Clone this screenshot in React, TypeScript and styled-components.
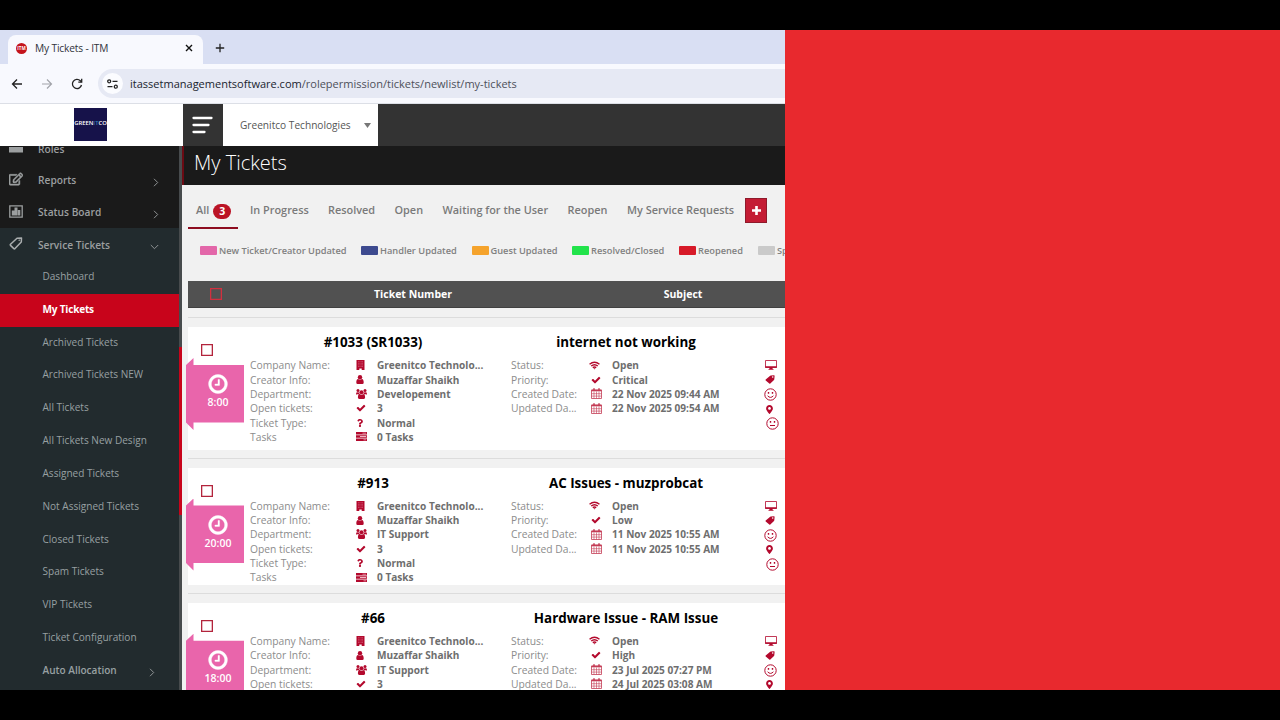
import React from "react";
import styled, { createGlobalStyle } from "styled-components";
import { FaMapMarkerAlt, FaQuestion, FaRegEdit } from "react-icons/fa";

const Global = createGlobalStyle`
  *{box-sizing:border-box}
  body{margin:0;background:#000;overflow:hidden}
  svg{display:block;flex:none}
`;
const Screen = styled.div`
  width:1280px;height:720px;padding:30px 0;display:flex;background:#000;
  font-family:"Open Sans","Noto Sans",sans-serif;white-space:nowrap;
`;
const Browser = styled.div`width:784.6px;height:660px;overflow:hidden;display:flex;flex-direction:column;background:#f1f1f1;`;
const RedPanel = styled.div`flex:1;background:#e8292e;`;

const TabStrip = styled.div`height:34px;flex:none;background:#d9dff3;display:flex;align-items:flex-end;padding-left:8px;`;
const BrowserTab = styled.div`
  width:195px;height:29px;background:#f8f9fe;border-radius:8px 8px 0 0;display:flex;align-items:center;
  padding:0 10px 3px 8px;font-size:10.2px;color:#30333b;
  span{margin-left:8px;flex:1;letter-spacing:-.15px}
`;
const Favicon = styled.i`
  width:11px;height:11px;border-radius:50%;background:#c4141c;color:#fff;font:700 4.5px/11px "Open Sans",sans-serif;text-align:center;
`;
const NewTab = styled.div`height:29px;display:flex;align-items:center;padding:0 0 4px 12px;`;
const AddressRow = styled.div`
  height:40px;flex:none;background:#f8f9fe;border-bottom:1px solid #dcdfe6;display:flex;align-items:center;padding-left:11px;
`;
const NavIcon = styled.div`width:30px;`;
const Omnibox = styled.div`
  margin-left:-3px;flex:1;height:29px;border-radius:15px 0 0 15px;background:#e6e9f4;display:flex;align-items:center;padding-left:4px;
  font-size:11.03px;color:#4d505a;
  b{font-weight:400;color:#20242e}
`;
const SiteInfo = styled.div`width:21px;height:21px;border-radius:50%;background:#fbfcff;display:flex;align-items:center;justify-content:center;margin-right:7px;`;

const AppBar = styled.div`height:42px;flex:none;display:flex;background:#333;`;
const LogoArea = styled.div`width:183px;background:#fff;display:flex;padding:4px 0 0 74px;`;
const Logo = styled.div`
  width:33px;height:33px;background:#16124a;color:#fff;font-size:5.9px;font-weight:600;line-height:31px;text-align:center;
  em{font-style:normal;color:#2f7fb5}
`;
const Burger = styled.div`width:40px;padding:12px 0 0 9px;`;
const CompanySelect = styled.div`
  width:155px;background:#fff;color:#555;font-size:10.15px;display:flex;align-items:center;justify-content:space-between;padding:0 7px 0 17px;
`;
const Body = styled.div`flex:1;display:flex;min-height:0;`;

const Sidebar = styled.div`width:179px;background:#222b2e;overflow:hidden;`;
const DarkGroup = styled.div`background:#1a1a1a;height:82px;display:flex;flex-direction:column;justify-content:flex-end;`;
const MenuRow = styled.div<{ $h?: number }>`
  height:${p => p.$h ?? 32}px;flex:none;display:flex;align-items:center;padding:0 20px 0 9px;color:#9c9fa0;font-size:10.2px;font-weight:600;
  >span{flex:1;margin-left:15px}
`;
const Glyph = styled.div`width:14px;padding-bottom:2px;`;
const Caret = styled.div`padding-top:5px;`;
const SubRow = styled.div<{ $active?: boolean; $bold?: boolean }>`
  height:32.83px;display:flex;align-items:center;justify-content:space-between;padding:0 24px 3px 42.5px;font-size:10.05px;
  color:${p => (p.$active ? "#fff" : "#98a0a2")};background:${p => (p.$active ? "#c8041b" : "transparent")};
  font-weight:${p => (p.$active ? 700 : p.$bold ? 600 : 400)};letter-spacing:${p => (p.$active ? "-.2px" : "0")};
`;
const Track = styled.div`width:3px;background:#474b4d;padding-top:201px;`;
const Thumb = styled.div`height:168px;background:#c8041b;`;

const Main = styled.div`flex:1;min-width:0;display:flex;flex-direction:column;background:#f1f1f1;overflow:hidden;`;
const TitleBar = styled.div`
  height:39px;flex:none;background:#1a1a1a;border-left:2px solid #6b0b14;color:#fff;font-weight:300;font-size:20px;line-height:33px;padding-left:10px;
`;
const Tabs = styled.div`height:44px;flex:none;display:flex;margin-left:6px;color:#7a7a7a;font-size:10.9px;font-weight:600;`;
const Tab = styled.div<{ $w: number; $on?: boolean }>`
  width:${p => p.$w}px;display:flex;align-items:center;padding:${p => (p.$on ? 7 : 5)}px 0 0 ${p => (p.$on ? 8 : 0)}px;
  ${p => p.$on && "margin-right:12px;border-bottom:2px solid #8e0d20;"}
`;
const Count = styled.span`
  margin:3px 0 0 4px;height:15px;width:18px;border-radius:8px;background:#bb1426;color:#fff;font-size:10.5px;font-weight:700;line-height:15px;text-align:center;
`;
const AddButton = styled.div`width:22px;height:25px;margin-top:13px;background:#c41c34;border:1px solid #8e1a2b;display:flex;align-items:center;justify-content:center;`;
const Legend = styled.div`height:52px;flex:none;padding:16px 0 0 18px;display:flex;color:#808080;font-size:9.25px;font-weight:600;line-height:12px;`;
const LegendItem = styled.div<{ $c: string; $w: number }>`
  width:${p => p.$w}px;flex:none;display:flex;
  &::before{content:"";width:17px;height:9px;border-radius:1px;background:${p => p.$c};margin:1px 2px 0 0;}
`;
const TableHead = styled.div`
  height:27px;flex:none;margin-left:6px;background:#515151;border-bottom:1px solid #404040;color:#fff;font-size:10.5px;font-weight:700;
  display:flex;align-items:center;padding-left:22px;
`;
const HeadCell = styled.span<{ $ml: number; $w: number }>`margin-left:${p => p.$ml}px;width:${p => p.$w}px;text-align:center;`;
const Box = styled.span<{ $c?: string }>`width:12px;height:12px;box-shadow:inset 0 0 0 1.3px ${p => p.$c ?? "#b3243c"};flex:none;`;
const Rule = styled.div<{ $h: number; $b: number }>`height:${p => p.$h}px;flex:none;margin:0 0 ${p => p.$b}px 6px;border-bottom:1px solid #dcdcdc;`;

const Card = styled.div<{ $h: number }>`height:${p => p.$h}px;flex:none;margin-left:4px;display:flex;background:linear-gradient(90deg,#f1f1f1 2px,#fff 2px);`;
const TimeCol = styled.div`width:58px;padding-top:17px;flex:none;`;
const BoxPad = styled.div`padding-left:15px;height:14px;display:flex;`;
const Ribbon = styled.div`
  height:73px;padding:15px 0 0 6px;color:#fff;background:#e965ab;font-size:10.5px;font-weight:600;
  clip-path:polygon(0 7px,7.5px 0,7.5px 7px,58px 7px,58px 64.5px,7.5px 64.5px,7.5px 72px,0 64.5px);
  display:flex;flex-direction:column;align-items:center;line-height:14px;
`;
const InfoCol = styled.div<{ $ml: number }>`width:248px;flex:none;margin-left:${p => p.$ml}px;padding-top:6px;`;
const CardTitle = styled.div`height:25px;line-height:18px;text-align:center;font-size:13.4px;font-weight:700;color:#000;padding-right:2px;`;
const InfoRow = styled.div<{ $l: number; $g: number; $pad?: number }>`
  height:14.35px;display:grid;grid-template-columns:${p => p.$l}px ${p => p.$g}px 1fr;align-items:center;font-size:10.3px;font-weight:500;color:#8c8c8c;
  padding-left:${p => p.$pad ?? 0}px;
  b{font-weight:700;font-size:10.08px;color:#6e6e6e}
`;
const IconCol = styled.div`margin-left:12px;padding-top:31px;`;
const IconCell = styled.div<{ $dx?: number }>`
  height:14.6px;width:14px;display:flex;align-items:center;justify-content:center;color:#b3092d;margin-left:${p => p.$dx ?? 0}px;
`;

const RED = "#b3092d";
const Check = () => (
  <svg width="10" height="10" viewBox="0 0 1792 1792" fill={RED}><path d="M1671 566q0 40-28 68l-724 724-136 136q-28 28-68 28t-68-28l-136-136-362-362q-28-28-28-68t28-68l136-136q28-28 68-28t68 28l294 295 656-657q28-28 68-28t68 28l136 136q28 28 28 68z" /></svg>
);
const Clock = () => (
  <svg width="22" height="22" viewBox="0 0 1792 1792" fill="#fff" stroke="#fff" strokeWidth="30"><path d="M1024 544v448q0 14-9 23t-23 9h-320q-14 0-23-9t-9-23v-64q0-14 9-23t23-9h224v-352q0-14 9-23t23-9h64q14 0 23 9t9 23zm416 352q0-148-73-273t-198-198-273-73-273 73-198 198-73 273 73 273 198 198 273 73 273-73 198-198 73-273zm224 0q0 209-103 385.500t-279.500 279.500-385.500 103-385.500-103-279.500-279.500-103-385.500 103-385.500 279.500-279.500 385.500-103 385.500 103 279.500 279.500 103 385.500z" /></svg>
);
const Building = () => (
  <svg width="9" height="10" viewBox="0 0 9 10"><path d="M.5 0h8v10H5.700V8.500H3.300V10H.5z" fill={RED} /><path d="M2.200 1.700h4.800M2.200 3.300h4.800M2.200 4.900h4.800M2.200 6.500h4.800" stroke="#d9718a" strokeWidth=".7" strokeDasharray=".8 .5" /></svg>
);
const Person = () => (
  <svg width="8" height="9" viewBox="0 0 8 9" fill={RED}><circle cx="4" cy="2.300" r="2.200" /><path d="M.3 7.500C.3 5.500 1 4.100 2 4.100q2 1.500 4 0C7 4.100 7.700 5.500 7.700 7.500Q7.700 9 6.400 9H1.600Q.3 9 .3 7.500z" /></svg>
);
const Group = () => (
  <svg width="11" height="10" viewBox="0 0 11 10" fill={RED}><circle cx="2" cy="1.600" r="1.500" /><circle cx="9" cy="1.600" r="1.500" /><circle cx="5.500" cy="3.300" r="2" /><path d="M0 5.500Q0 3.300 1 3.200l2.200.2q.1 1.300.8 1.900H1q-1 .6-1 .2zM11 5.500q0-2.200-1-2.300l-2.200.2Q7.700 4.700 7 5.300h3q1 .6 1 .2zM1.900 8.600q0-3.400 1.700-3.500 1.900 1.200 3.800 0 1.700.1 1.700 3.500Q9.100 10 7.800 10H3.200Q1.900 10 1.900 8.600z" /></svg>
);
const Wifi = () => (
  <svg width="11" height="9" viewBox="0 0 12 9" fill="none" stroke={RED} strokeWidth="1.500"><path d="M.6 3.200q5.400-4.600 10.800 0M2.400 5.100q3.600-3 7.200 0M4.100 6.800q1.900-1.500 3.800 0" /><path d="M4.900 7.500h2.200L6 8.800z" fill={RED} stroke="none" /></svg>
);
const Tag = () => (
  <svg width="10" height="9" viewBox="0 0 10 9"><path d="M5.700.500L9 .300q.7 0 .6.700l-.3 3.200q0 .4-.3.700L5.300 8.500q-.5.500-1 0L.7 5.400q-.5-.5 0-1L4.900.900q.4-.4.800-.4z" fill={RED} /><circle cx="7.700" cy="2" r=".8" fill="#fff" /></svg>
);
const Calendar = () => (
  <svg width="11" height="11" viewBox="0 0 11 11" fill="none" stroke="#c43c56"><path d="M.5 2h10v8.500H.5z" strokeWidth=".8" /><path d="M.5 2.500h10" strokeWidth="1.600" /><path d="M3 .2v2.500M8 .2v2.500" strokeWidth="1.500" /><path d="M.5 5.700h10M.5 8.100h10M3 3.500v7M5.500 3.500v7M8 3.500v7" strokeWidth=".6" /></svg>
);
const Tasks = () => (
  <svg width="11" height="9" viewBox="0 0 11 9" fill={RED}><path d="M0 0h11v2.400H0zM0 3.300h11v2.400H0zM0 6.600h11V9H0z" /><path d="M6.500.8h3.700v.8H6.500zM4 4.100h6.200v.8H4zM7.500 7.400h2.700v.8H7.500z" fill="#f3b6c3" /></svg>
);
const Monitor = () => (
  <svg width="12" height="10" viewBox="0 0 12 10"><path d="M.5.500h11v7H.5z" fill="none" stroke={RED} strokeWidth=".8" /><path d="M.3 6.300h11.400v1.500H.3zM4.700 7.500h2.600l.5 1.500h.7v.8h-5V9h.7z" fill={RED} /></svg>
);
const Face = ({ flat }: { flat?: boolean }) => (
  <svg width="13" height="13" viewBox="0 0 13 13" fill="none" stroke={RED}><circle cx="6.500" cy="6.500" r="5.700" /><path d={flat ? "M4 8.500h5" : "M3.600 7.800q2.900 3.200 5.800 0"} /><path d="M4.500 4v1.800M8.500 4v1.800" strokeWidth="1.400" /></svg>
);
const Chevron = ({ down }: { down?: boolean }) => (
  <svg width={down ? 9 : 6} height={down ? 6 : 9} viewBox={down ? "0 0 9 6" : "0 0 6 9"} fill="none" stroke="#9c9fa0" strokeWidth=".9"><path d={down ? "M.8 1l3.700 3.700L8.200 1" : "M1 .8l3.700 3.700L1 8.200"} /></svg>
);

type Ticket = { h: number; time: string; id: string; subject: string; dept: string; priority: string; created: string; updated: string };
const tickets: Ticket[] = [
  { h: 123, time: "8:00", id: "#1033 (SR1033)", subject: "internet not working", dept: "Developement", priority: "Critical", created: "22 Nov 2025 09:44 AM", updated: "22 Nov 2025 09:54 AM" },
  { h: 117.6, time: "20:00", id: "#913", subject: "AC Issues - muzprobcat", dept: "IT Support", priority: "Low", created: "11 Nov 2025 10:55 AM", updated: "11 Nov 2025 10:55 AM" },
  { h: 123, time: "18:00", id: "#66", subject: "Hardware Issue - RAM Issue", dept: "IT Support", priority: "High", created: "23 Jul 2025 07:27 PM", updated: "24 Jul 2025 03:08 AM" },
];

function TicketCard({ t }: { t: Ticket }) {
  const left: [string, React.ReactNode, string][] = [
    ["Company Name:", <Building />, "Greenitco Technolo..."],
    ["Creator Info:", <Person />, "Muzaffar Shaikh"],
    ["Department:", <Group />, t.dept],
    ["Open tickets:", <Check />, "3"],
    ["Ticket Type:", <FaQuestion size={8} color={RED} />, "Normal"],
    ["Tasks", <Tasks />, "0 Tasks"],
  ];
  const right: [string, React.ReactNode, string][] = [
    ["Status:", <Wifi />, "Open"],
    ["Priority:", <Check />, t.priority],
    ["Created Date:", <Calendar />, t.created],
    ["Updated Da...", <Calendar />, t.updated],
  ];
  return (
    <Card $h={t.h}>
      <TimeCol>
        <BoxPad><Box /></BoxPad>
        <Ribbon><Clock /><span>{t.time}</span></Ribbon>
      </TimeCol>
      <InfoCol $ml={6}>
        <CardTitle>{t.id}</CardTitle>
        {left.map(([l, i, v]) => <InfoRow key={l} $l={105.5} $g={21.5}><span>{l}</span>{i}<b>{v}</b></InfoRow>)}
      </InfoCol>
      <InfoCol $ml={5}>
        <CardTitle>{t.subject}</CardTitle>
        {right.map(([l, i, v], n) => <InfoRow key={l} $pad={8} $l={n ? 80 : 78} $g={n ? 21 : 23}><span>{l}</span>{i}<b>{v}</b></InfoRow>)}
      </InfoCol>
      <IconCol>
        <IconCell $dx={1}><Monitor /></IconCell>
        <IconCell><Tag /></IconCell>
        <IconCell><Face /></IconCell>
        <IconCell $dx={-1}><FaMapMarkerAlt size={9} /></IconCell>
        <IconCell $dx={2}><Face flat /></IconCell>
      </IconCol>
    </Card>
  );
}

const subItems = ["Dashboard", "My Tickets", "Archived Tickets", "Archived Tickets NEW", "All Tickets", "All Tickets New Design", "Assigned Tickets", "Not Assigned Tickets", "Closed Tickets", "Spam Tickets", "VIP Tickets", "Ticket Configuration", "Auto Allocation"];
const tabs: [string, number][] = [["In Progress", 78], ["Resolved", 66.5], ["Open", 48], ["Waiting for the User", 125], ["Reopen", 59.5], ["My Service Requests", 118]];
const legend: [string, string, number][] = [["#e367a9", "New Ticket/Creator Updated", 161], ["#3d4a8f", "Handler Updated", 110.5], ["#f5a32c", "Guest Updated", 100.5], ["#22e34b", "Resolved/Closed", 107], ["#d71a28", "Reopened", 79], ["#cacaca", "Spam", 60]];

export default function App() {
  return (
    <Screen>
      <Global />
      <Browser>
        <TabStrip>
          <BrowserTab>
            <Favicon>ITM</Favicon><span>My Tickets - ITM</span>
            <svg width="8" height="8" viewBox="0 0 8 8" stroke="#111" strokeWidth="1.400"><path d="M1 1l6 6M7 1L1 7" /></svg>
          </BrowserTab>
          <NewTab><svg width="10" height="10" viewBox="0 0 10 10" stroke="#222" strokeWidth="1.300"><path d="M5 .8v8.400M.8 5h8.400" /></svg></NewTab>
        </TabStrip>
        <AddressRow>
          <NavIcon><svg width="12" height="12" viewBox="0 0 12 12" fill="none" stroke="#222" strokeWidth="1.300"><path d="M11 6H1.500M6 1.500L1.500 6 6 10.500" /></svg></NavIcon>
          <NavIcon><svg width="12" height="12" viewBox="0 0 12 12" fill="none" stroke="#a2a4aa" strokeWidth="1.200"><path d="M1 6h9.500M6 1.500L10.500 6 6 10.500" /></svg></NavIcon>
          <NavIcon><svg width="12" height="12" viewBox="0 0 12 12" fill="none" stroke="#222" strokeWidth="1.300"><path d="M10.500 7A4.600 4.600 0 1 1 9.300 2.700L10.600 4" /><path d="M10.700.800v3.400H7.300" /></svg></NavIcon>
          <Omnibox>
            <SiteInfo><svg width="11" height="10" viewBox="0 0 11 10" fill="none" stroke="#222" strokeWidth="1.300"><circle cx="2.200" cy="2.300" r="1.500" /><path d="M5.500 2.300h5M.5 7.700h5" /><circle cx="8.800" cy="7.700" r="1.500" /></svg></SiteInfo>
            <b>itassetmanagementsoftware.com</b>/rolepermission/tickets/newlist/my-tickets
          </Omnibox>
        </AddressRow>
        <AppBar>
          <LogoArea><Logo>GREEN<em>IT</em>CO</Logo></LogoArea>
          <Burger><svg width="21" height="18" viewBox="0 0 21 18" stroke="#fff" strokeWidth="2.300" strokeLinecap="round"><path d="M1.500 2h18M1.500 9h15M1.500 16h11" /></svg></Burger>
          <CompanySelect><span>Greenitco Technologies</span><svg width="7" height="5" viewBox="0 0 7 5" fill="#777"><path d="M0 0h7L3.500 5z" /></svg></CompanySelect>
        </AppBar>
        <Body>
          <Sidebar>
            <DarkGroup>
              <MenuRow $h={31}><Glyph><svg width="14" height="11" viewBox="0 0 14 11" fill="#9c9fa0"><path d="M0 0h14v4H0zM0 5h14v5.500H0z" /></svg></Glyph><span>Roles</span></MenuRow>
              <MenuRow><Glyph><FaRegEdit size={14} strokeWidth={20} stroke="#9c9fa0" /></Glyph><span>Reports</span><Caret><Chevron /></Caret></MenuRow>
              <MenuRow><Glyph><svg width="14" height="13" viewBox="0 0 14 13"><path d="M.8.800h12.400v11.400H.8z" fill="none" stroke="#9c9fa0" strokeWidth="1.300" /><path d="M2.800 5.500h2.700v5H2.800zM5.500 2.500h3v8h-3zM8.800 5h2.500v5.500H8.800z" fill="#9c9fa0" /></svg></Glyph><span>Status Board</span><Caret><Chevron /></Caret></MenuRow>
            </DarkGroup>
            <MenuRow $h={33}><Glyph><svg width="14" height="13" viewBox="0 0 14 13" fill="none" stroke="#a9adae" strokeWidth="1.500"><path d="M8 1.200l4.500-.3-.2 4-6.300 6.700q-.6.500-1.200 0L1.500 8.400q-.6-.6 0-1.200z" strokeLinejoin="round" /><circle cx="10.200" cy="3.200" r=".4" strokeWidth="1" /></svg></Glyph><span>Service Tickets</span><Caret><Chevron down /></Caret></MenuRow>
            {subItems.map((s, i) => (
              <SubRow key={s} $active={i === 1} $bold={i === 12}><span>{s}</span>{i === 12 && <Caret><Chevron /></Caret>}</SubRow>
            ))}
          </Sidebar>
          <Track><Thumb /></Track>
          <Main>
            <TitleBar>My Tickets</TitleBar>
            <Tabs>
              <Tab $w={50} $on>All<Count>3</Count></Tab>
              {tabs.map(([l, w]) => <Tab key={l} $w={w}>{l}</Tab>)}
              <AddButton><svg width="9" height="9" viewBox="0 0 9 9" stroke="#fff" strokeWidth="2.600"><path d="M4.500 0v9M0 4.500h9" /></svg></AddButton>
            </Tabs>
            <Legend>{legend.map(([c, l, w]) => <LegendItem key={l} $c={c} $w={w}>{l}</LegendItem>)}</Legend>
            <TableHead><Box $c="#d2303f" /><HeadCell $ml={141} $w={100}>Ticket Number</HeadCell><HeadCell $ml={170} $w={100}>Subject</HeadCell></TableHead>
            <Rule $h={10} $b={9} />
            <TicketCard t={tickets[0]} />
            <Rule $h={9} $b={8.6} />
            <TicketCard t={tickets[1]} />
            <Rule $h={9} $b={8.6} />
            <TicketCard t={tickets[2]} />
          </Main>
        </Body>
      </Browser>
      <RedPanel />
    </Screen>
  );
}
